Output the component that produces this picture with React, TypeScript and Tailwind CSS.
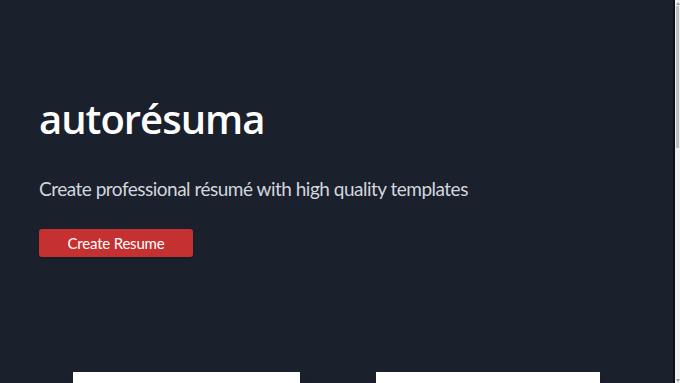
function Scrollbar() {
  return (
    <div className="flex w-[7px] shrink-0 flex-col border-l-2 border-[#0d1117] bg-[#f1f1f1]">
      <div className="flex h-[6px] items-center justify-center">
        <div className="h-0 w-0 border-x-[2px] border-b-[3px] border-x-transparent border-b-[#a3a3a3]" />
      </div>
      <div className="mx-[1px] h-[142px] bg-[#c1c1c1]" />
      <div className="flex-1" />
      <div className="flex h-[6px] items-center justify-center">
        <div className="h-0 w-0 border-x-[2px] border-t-[3px] border-x-transparent border-t-[#a3a3a3]" />
      </div>
    </div>
  );
}

export default function App() {
  return (
    <div className="flex h-screen overflow-hidden bg-[#1a202c]" style={{ fontFamily: 'Lato, sans-serif' }}>
      <main className="min-w-0 flex-1">
        <section className="px-[39px] pt-[99px]">
          <h1
            className="text-[40px] font-semibold leading-none text-white tracking-[-1px]"
            style={{ fontFamily: '"Open Sans", sans-serif' }}
          >
            autorésuma
          </h1>
          <p className="mt-[38px] text-[19px] leading-[24px] text-[#d2d6dc] tracking-[-0.5px]">
            Create professional résumé with high quality templates
          </p>
          <button className="mt-[28px] w-[154px] h-[28px] rounded-[3px] bg-[#c53030] text-[15px] text-white tracking-[-0.2px] shadow">
            Create Resume
          </button>
        </section>
        <section className="mt-[115px] flex justify-between pl-[73px] pr-[73px]">
          <div className="w-[227px] h-[600px] bg-white shadow-lg" />
          <div className="w-[224px] h-[600px] bg-white shadow-lg" />
        </section>
      </main>
      <Scrollbar />
    </div>
  );
}
